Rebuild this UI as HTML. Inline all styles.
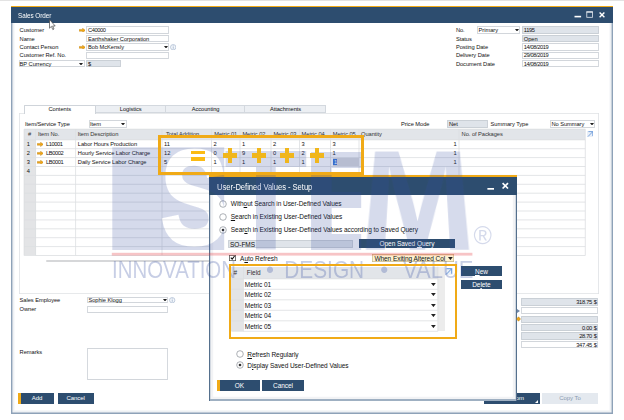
<!DOCTYPE html>
<html lang="en"><head><meta charset="utf-8"><title>Sales Order</title>
<style>
html,body{margin:0;padding:0;background:#fff;}
body{width:624px;height:420px;position:relative;overflow:hidden;font-family:"Liberation Sans",sans-serif;}
.b{position:absolute;display:block;}
.t{position:absolute;white-space:nowrap;letter-spacing:-0.05px;}
u{text-decoration-thickness:0.5px;text-underline-offset:0.6px;}
</style></head>
<body>
<div class="b" style="left:0.00px;top:0.00px;width:624.00px;height:1.40px;background:#e3e3e3;"></div>
<div class="b" style="left:10.60px;top:5.60px;width:602.00px;height:408.00px;background:#ffffff;box-shadow:inset 0 0 0 1.4px #8ea2b8, inset 0 0 0 3.4px #eef1f4;"></div>
<div class="b" style="left:10.60px;top:5.50px;width:602.00px;height:1.70px;background:#f0aa17;"></div>
<div class="b" style="left:10.60px;top:7.00px;width:602.00px;height:15.60px;background:#2d4d6f;"></div>
<div class="t" style="transform:scaleX(0.8325);transform-origin:0 50%;top:10.86px;font-size:7.6px;line-height:9.88px;color:#fff;left:17.70px;">Sales Order</div>
<svg class="b" style="left:570px;top:8px" width="40" height="14" viewBox="570 8 40 14"><rect x="574.5" y="15.8" width="6.6" height="1.6" fill="#fff"/><rect x="586.8" y="11.9" width="5.6" height="5.4" fill="none" stroke="#e4e9ef" stroke-width="0.8"/><rect x="586.4" y="11.4" width="6.4" height="1.2" fill="#e4e9ef"/><path d="M599.6 12.4L604.4 17.2M604.4 12.4L599.6 17.2" stroke="#fff" stroke-width="1.4"/></svg>
<svg class="b" style="left:46px;top:18px" width="12" height="14" viewBox="0 0 12 14"><path d="M3.5 1.5 L3.5 10.2 L5.4 8.4 L6.8 11.6 L8 11 L6.6 8 L9.2 8 Z" fill="#fff" stroke="#444" stroke-width="0.7"/></svg>
<div class="t" style="top:27.18px;font-size:5.72px;line-height:7.44px;color:#111;left:19.60px;">Customer</div>
<div class="t" style="top:35.68px;font-size:5.72px;line-height:7.44px;color:#111;left:19.60px;">Name</div>
<div class="t" style="top:44.18px;font-size:5.72px;line-height:7.44px;color:#111;left:19.60px;">Contact Person</div>
<div class="t" style="top:52.38px;font-size:5.72px;line-height:7.44px;color:#111;left:19.60px;">Customer Ref. No.</div>
<div class="b" style="left:86.40px;top:26.40px;width:82.20px;height:7.40px;background:#fff;box-shadow:inset 0 0 0 0.7px #c3c9d0;border-radius:1px;"></div>
<div class="t" style="top:27.18px;font-size:5.72px;line-height:7.44px;color:#111;left:88.00px;letter-spacing:-0.42px;">C40000</div>
<svg class="b" style="left:78.60px;top:27.70px" width="6.7" height="4.7" viewBox="0 0 64 52" preserveAspectRatio="none"><path d="M2 16H34V2L62 26L34 50V36H2Z" fill="#f0a818" stroke="#b87a10" stroke-width="4"/></svg>
<div class="b" style="left:86.40px;top:34.90px;width:82.20px;height:7.40px;background:#fff;box-shadow:inset 0 0 0 0.7px #c3c9d0;border-radius:1px;"></div>
<div class="t" style="top:35.68px;font-size:5.72px;line-height:7.44px;color:#111;left:88.00px;">Earthshaker Corporation</div>
<div class="b" style="left:86.40px;top:43.40px;width:82.20px;height:7.40px;background:#fff;box-shadow:inset 0 0 0 0.7px #c3c9d0;border-radius:1px;"></div>
<div class="t" style="top:44.18px;font-size:5.72px;line-height:7.44px;color:#111;left:88.00px;">Bob McKensly</div>
<svg class="b" style="left:78.60px;top:44.70px" width="6.7" height="4.7" viewBox="0 0 64 52" preserveAspectRatio="none"><path d="M2 16H34V2L62 26L34 50V36H2Z" fill="#f0a818" stroke="#b87a10" stroke-width="4"/></svg>
<svg class="b" style="left:163.70px;top:45.90px" width="4.00" height="2.60" viewBox="0 0 40 26"><path d="M0 0H40L20 26Z" fill="#222"/></svg>
<svg class="b" style="left:170.10px;top:43.90px" width="6.4" height="6.4" viewBox="0 0 64 64"><circle cx="32" cy="32" r="27" fill="#f4f7fb" stroke="#a9b9d0" stroke-width="7"/><rect x="28" y="26" width="8" height="22" fill="#9fb2cc"/><rect x="28" y="14" width="8" height="8" fill="#9fb2cc"/></svg>
<div class="b" style="left:86.40px;top:51.60px;width:82.20px;height:7.40px;background:#fff;box-shadow:inset 0 0 0 0.7px #c3c9d0;border-radius:1px;"></div>
<div class="b" style="left:18.60px;top:60.10px;width:66.00px;height:7.40px;background:#fff;box-shadow:inset 0 0 0 0.7px #c3c9d0;border-radius:1px;"></div>
<div class="t" style="top:60.88px;font-size:5.72px;line-height:7.44px;color:#111;left:19.60px;">BP Currency</div>
<svg class="b" style="left:79.20px;top:62.60px" width="4.00" height="2.60" viewBox="0 0 40 26"><path d="M0 0H40L20 26Z" fill="#222"/></svg>
<div class="b" style="left:86.40px;top:60.10px;width:34.20px;height:7.40px;background:#dfe4ea;box-shadow:inset 0 0 0 0.7px #c3c9d0;border-radius:1px;"></div>
<div class="t" style="top:60.88px;font-size:5.72px;line-height:7.44px;color:#111;left:88.00px;">$</div>
<div class="t" style="top:27.18px;font-size:5.72px;line-height:7.44px;color:#111;left:455.90px;">No.</div>
<div class="t" style="top:35.68px;font-size:5.72px;line-height:7.44px;color:#111;left:455.90px;">Status</div>
<div class="t" style="top:44.18px;font-size:5.72px;line-height:7.44px;color:#111;left:455.90px;">Posting Date</div>
<div class="t" style="top:52.38px;font-size:5.72px;line-height:7.44px;color:#111;left:455.90px;">Delivery Date</div>
<div class="t" style="top:60.88px;font-size:5.72px;line-height:7.44px;color:#111;left:455.90px;">Document Date</div>
<div class="b" style="left:477.00px;top:26.40px;width:43.20px;height:7.40px;background:#fff;box-shadow:inset 0 0 0 0.7px #c3c9d0;border-radius:1px;"></div>
<div class="t" style="top:27.18px;font-size:5.72px;line-height:7.44px;color:#111;left:478.60px;">Primary</div>
<svg class="b" style="left:514.80px;top:28.90px" width="4.00" height="2.60" viewBox="0 0 40 26"><path d="M0 0H40L20 26Z" fill="#222"/></svg>
<div class="b" style="left:522.20px;top:26.40px;width:76.40px;height:7.40px;background:#dfe4ea;box-shadow:inset 0 0 0 0.7px #c3c9d0;border-radius:1px;"></div>
<div class="t" style="top:27.18px;font-size:5.72px;line-height:7.44px;color:#111;left:523.80px;letter-spacing:-0.42px;">1195</div>
<div class="b" style="left:522.20px;top:34.90px;width:76.40px;height:7.40px;background:#dfe4ea;box-shadow:inset 0 0 0 0.7px #c3c9d0;border-radius:1px;"></div>
<div class="t" style="top:35.68px;font-size:5.72px;line-height:7.44px;color:#111;left:523.80px;">Open</div>
<div class="b" style="left:522.20px;top:43.40px;width:76.40px;height:7.40px;background:#fff;box-shadow:inset 0 0 0 0.7px #c3c9d0;border-radius:1px;"></div>
<div class="t" style="top:44.18px;font-size:5.72px;line-height:7.44px;color:#111;left:523.80px;letter-spacing:-0.42px;">14/08/2019</div>
<div class="b" style="left:522.20px;top:51.60px;width:76.40px;height:7.40px;background:#fff;box-shadow:inset 0 0 0 0.7px #c3c9d0;border-radius:1px;"></div>
<div class="t" style="top:52.38px;font-size:5.72px;line-height:7.44px;color:#111;left:523.80px;letter-spacing:-0.42px;">29/08/2019</div>
<div class="b" style="left:522.20px;top:60.10px;width:76.40px;height:7.40px;background:#fff;box-shadow:inset 0 0 0 0.7px #c3c9d0;border-radius:1px;"></div>
<div class="t" style="top:60.88px;font-size:5.72px;line-height:7.44px;color:#111;left:523.80px;letter-spacing:-0.42px;">14/08/2019</div>
<div class="b" style="left:19.00px;top:113.00px;width:580.00px;height:181.40px;background:#fff;box-shadow:inset 0 0 0 0.8px #dfe2e5;"></div>
<div class="b" style="left:23.80px;top:104.60px;width:71.90px;height:9.30px;background:#fff;border:0.8px solid #cfd4da;border-bottom:none;box-sizing:border-box;border-radius:1px 1px 0 0;"></div>
<div class="t" style="top:106.08px;font-size:5.72px;line-height:7.44px;color:#111;left:-40.25px;width:200px;text-align:center;">Contents</div>
<div class="b" style="left:95.70px;top:104.60px;width:70.10px;height:8.80px;background:#eceff3;border:0.8px solid #d3d8de;box-sizing:border-box;border-left:none;"></div>
<div class="t" style="top:106.08px;font-size:5.72px;line-height:7.44px;color:#111;left:30.75px;width:200px;text-align:center;">Logistics</div>
<div class="b" style="left:165.80px;top:104.60px;width:79.50px;height:8.80px;background:#eceff3;border:0.8px solid #d3d8de;box-sizing:border-box;border-left:none;"></div>
<div class="t" style="top:106.08px;font-size:5.72px;line-height:7.44px;color:#111;left:105.55px;width:200px;text-align:center;">Accounting</div>
<div class="b" style="left:245.30px;top:104.60px;width:80.40px;height:8.80px;background:#eceff3;border:0.8px solid #d3d8de;box-sizing:border-box;border-left:none;"></div>
<div class="t" style="top:106.08px;font-size:5.72px;line-height:7.44px;color:#111;left:185.50px;width:200px;text-align:center;">Attachments</div>
<div class="t" style="top:121.18px;font-size:5.72px;line-height:7.44px;color:#111;left:25.00px;">Item/Service Type</div>
<div class="b" style="left:88.50px;top:120.40px;width:38.30px;height:7.40px;background:#fff;box-shadow:inset 0 0 0 0.7px #c3c9d0;border-radius:1px;"></div>
<div class="t" style="top:121.18px;font-size:5.72px;line-height:7.44px;color:#111;left:90.00px;">Item</div>
<svg class="b" style="left:121.40px;top:122.90px" width="4.00" height="2.60" viewBox="0 0 40 26"><path d="M0 0H40L20 26Z" fill="#222"/></svg>
<div class="t" style="top:120.98px;font-size:5.72px;line-height:7.44px;color:#111;left:401.00px;">Price Mode</div>
<div class="b" style="left:447.40px;top:120.20px;width:40.20px;height:7.40px;background:#dfe4ea;box-shadow:inset 0 0 0 0.7px #c3c9d0;border-radius:1px;"></div>
<div class="t" style="top:120.98px;font-size:5.72px;line-height:7.44px;color:#111;left:449.00px;">Net</div>
<div class="t" style="top:120.98px;font-size:5.72px;line-height:7.44px;color:#111;left:490.60px;">Summary Type</div>
<div class="b" style="left:550.00px;top:120.40px;width:44.70px;height:7.40px;background:#fff;box-shadow:inset 0 0 0 0.7px #c3c9d0;border-radius:1px;"></div>
<div class="t" style="top:121.18px;font-size:5.72px;line-height:7.44px;color:#111;left:551.40px;">No Summary</div>
<svg class="b" style="left:590.00px;top:122.90px" width="4.00" height="2.60" viewBox="0 0 40 26"><path d="M0 0H40L20 26Z" fill="#222"/></svg>
<div class="b" style="left:24.10px;top:129.20px;width:561.20px;height:10.60px;background:#e2e5e9;"></div>
<div class="b" style="left:24.10px;top:139.80px;width:11.50px;height:115.70px;background:#e3e4e6;"></div>
<svg class="b" style="left:0;top:0" width="624" height="420" viewBox="0 0 624 420" fill="none" stroke="#dcdee1" stroke-width="0.8"><path d="M24.1 129.20H585.3"/><path d="M24.1 139.80H585.3"/><path d="M24.1 148.70H585.3"/><path d="M24.1 157.60H585.3"/><path d="M24.1 166.50H585.3"/><path d="M24.1 175.40H585.3"/><path d="M24.1 184.30H585.3"/><path d="M24.1 193.20H585.3"/><path d="M24.1 202.10H585.3"/><path d="M24.1 211.00H585.3"/><path d="M24.1 219.90H585.3"/><path d="M24.1 228.80H585.3"/><path d="M24.1 237.70H585.3"/><path d="M24.1 246.60H585.3"/><path d="M24.1 255.50H585.3"/><path d="M24.1 129.2V255.5"/><path d="M35.6 129.2V255.5"/><path d="M75.6 129.2V255.5"/><path d="M162 129.2V255.5"/><path d="M211.5 129.2V255.5"/><path d="M240 129.2V255.5"/><path d="M271 129.2V255.5"/><path d="M299.5 129.2V255.5"/><path d="M330.5 129.2V255.5"/><path d="M359 129.2V255.5"/><path d="M459 129.2V255.5"/><path d="M585.3 129.2V255.5"/></svg>
<div class="t" style="top:131.08px;font-size:5.72px;line-height:7.44px;color:#333;left:27.90px;">#</div>
<div class="t" style="top:131.08px;font-size:5.72px;line-height:7.44px;color:#333;left:38.00px;">Item No.</div>
<div class="t" style="top:131.08px;font-size:5.72px;line-height:7.44px;color:#333;left:77.80px;">Item Description</div>
<div class="t" style="top:131.08px;font-size:5.72px;line-height:7.44px;color:#333;left:165.90px;">Total Addition</div>
<div class="t" style="top:131.08px;font-size:5.72px;line-height:7.44px;color:#333;left:214.20px;">Metric 01</div>
<div class="t" style="top:131.08px;font-size:5.72px;line-height:7.44px;color:#333;left:242.40px;">Metric 02</div>
<div class="t" style="top:131.08px;font-size:5.72px;line-height:7.44px;color:#333;left:273.40px;">Metric 03</div>
<div class="t" style="top:131.08px;font-size:5.72px;line-height:7.44px;color:#333;left:301.60px;">Metric 04</div>
<div class="t" style="top:131.08px;font-size:5.72px;line-height:7.44px;color:#333;left:332.70px;">Metric 05</div>
<div class="t" style="top:131.08px;font-size:5.72px;line-height:7.44px;color:#333;left:361.00px;">Quantity</div>
<div class="t" style="top:131.08px;font-size:5.72px;line-height:7.44px;color:#333;left:461.60px;">No. of Packages</div>
<div class="t" style="top:141.43px;font-size:5.72px;line-height:7.44px;color:#111;left:26.80px;">1</div>
<svg class="b" style="left:36.50px;top:141.95px" width="6.7" height="4.7" viewBox="0 0 64 52" preserveAspectRatio="none"><path d="M2 16H34V2L62 26L34 50V36H2Z" fill="#f0a818" stroke="#b87a10" stroke-width="4"/></svg>
<div class="t" style="top:141.43px;font-size:5.72px;line-height:7.44px;color:#111;left:46.00px;letter-spacing:-0.42px;">L10001</div>
<div class="t" style="top:141.43px;font-size:5.72px;line-height:7.44px;color:#111;left:77.80px;">Labor Hours Production</div>
<div class="t" style="top:141.43px;font-size:5.72px;line-height:7.44px;color:#111;left:164.10px;">11</div>
<div class="t" style="top:141.43px;font-size:5.72px;line-height:7.44px;color:#111;left:213.50px;">2</div>
<div class="t" style="top:141.43px;font-size:5.72px;line-height:7.44px;color:#111;left:242.00px;">1</div>
<div class="t" style="top:141.43px;font-size:5.72px;line-height:7.44px;color:#111;left:273.00px;">2</div>
<div class="t" style="top:141.43px;font-size:5.72px;line-height:7.44px;color:#111;left:301.50px;">3</div>
<div class="t" style="top:141.43px;font-size:5.72px;line-height:7.44px;color:#111;left:332.50px;">3</div>
<div class="t" style="top:141.43px;font-size:5.72px;line-height:7.44px;color:#111;right:167.40px;">1</div>
<div class="t" style="top:150.33px;font-size:5.72px;line-height:7.44px;color:#111;left:26.80px;">2</div>
<svg class="b" style="left:36.50px;top:150.85px" width="6.7" height="4.7" viewBox="0 0 64 52" preserveAspectRatio="none"><path d="M2 16H34V2L62 26L34 50V36H2Z" fill="#f0a818" stroke="#b87a10" stroke-width="4"/></svg>
<div class="t" style="top:150.33px;font-size:5.72px;line-height:7.44px;color:#111;left:46.00px;letter-spacing:-0.42px;">LB0002</div>
<div class="t" style="top:150.33px;font-size:5.72px;line-height:7.44px;color:#111;left:77.80px;">Hourly Service Labor Charge</div>
<div class="t" style="top:150.33px;font-size:5.72px;line-height:7.44px;color:#111;left:164.10px;">12</div>
<div class="t" style="top:150.33px;font-size:5.72px;line-height:7.44px;color:#111;left:213.50px;">0</div>
<div class="t" style="top:150.33px;font-size:5.72px;line-height:7.44px;color:#111;left:242.00px;">9</div>
<div class="t" style="top:150.33px;font-size:5.72px;line-height:7.44px;color:#111;left:273.00px;">0</div>
<div class="t" style="top:150.33px;font-size:5.72px;line-height:7.44px;color:#111;left:301.50px;">2</div>
<div class="t" style="top:150.33px;font-size:5.72px;line-height:7.44px;color:#111;left:332.50px;">1</div>
<div class="t" style="top:150.33px;font-size:5.72px;line-height:7.44px;color:#111;right:167.40px;">1</div>
<div class="t" style="top:159.23px;font-size:5.72px;line-height:7.44px;color:#111;left:26.80px;">3</div>
<svg class="b" style="left:36.50px;top:159.75px" width="6.7" height="4.7" viewBox="0 0 64 52" preserveAspectRatio="none"><path d="M2 16H34V2L62 26L34 50V36H2Z" fill="#f0a818" stroke="#b87a10" stroke-width="4"/></svg>
<div class="t" style="top:159.23px;font-size:5.72px;line-height:7.44px;color:#111;left:46.00px;letter-spacing:-0.42px;">LB0001</div>
<div class="t" style="top:159.23px;font-size:5.72px;line-height:7.44px;color:#111;left:77.80px;">Daily Service Labor Charge</div>
<div class="t" style="top:159.23px;font-size:5.72px;line-height:7.44px;color:#111;left:164.10px;">5</div>
<div class="t" style="top:159.23px;font-size:5.72px;line-height:7.44px;color:#111;left:213.50px;">1</div>
<div class="t" style="top:159.23px;font-size:5.72px;line-height:7.44px;color:#111;left:242.00px;">1</div>
<div class="t" style="top:159.23px;font-size:5.72px;line-height:7.44px;color:#111;left:273.00px;">1</div>
<div class="t" style="top:159.23px;font-size:5.72px;line-height:7.44px;color:#111;left:301.50px;">1</div>
<div class="t" style="top:159.23px;font-size:5.72px;line-height:7.44px;color:#111;right:167.40px;">1</div>
<div class="t" style="top:168.03px;font-size:5.72px;line-height:7.44px;color:#111;left:26.80px;">4</div>
<div class="b" style="left:333.20px;top:158.45px;width:25.60px;height:7.20px;background:#d9dbde;"></div>
<div class="b" style="left:333.40px;top:159.05px;width:3.40px;height:6.00px;background:#3c78d8;"></div>
<div class="t" style="top:159.13px;font-size:5.72px;line-height:7.44px;color:#fff;left:333.90px;">1</div>
<svg class="b" style="left:586.60px;top:130.60px" width="6.4" height="6.4" viewBox="0 0 64 64"><rect x="0" y="0" width="64" height="64" fill="#e9eff8"/><path d="M14 6H58V50M58 6L10 56" fill="none" stroke="#5b8fd6" stroke-width="8"/></svg>
<div class="b" style="left:45.50px;top:259.60px;width:214.50px;height:2.60px;background:#d6d7d9;border-radius:1.3px;"></div>
<div class="t" style="top:296.68px;font-size:5.72px;line-height:7.44px;color:#111;left:19.60px;">Sales Employee</div>
<div class="b" style="left:86.90px;top:296.60px;width:80.90px;height:6.80px;background:#fff;box-shadow:inset 0 0 0 0.7px #c3c9d0;border-radius:1px;"></div>
<div class="t" style="top:297.08px;font-size:5.72px;line-height:7.44px;color:#111;left:88.40px;">Sophie Klogg</div>
<svg class="b" style="left:162.80px;top:298.60px" width="4.00" height="2.60" viewBox="0 0 40 26"><path d="M0 0H40L20 26Z" fill="#222"/></svg>
<svg class="b" style="left:169.30px;top:296.60px" width="6.4" height="6.4" viewBox="0 0 64 64"><circle cx="32" cy="32" r="27" fill="#f4f7fb" stroke="#a9b9d0" stroke-width="7"/><rect x="28" y="26" width="8" height="22" fill="#9fb2cc"/><rect x="28" y="14" width="8" height="8" fill="#9fb2cc"/></svg>
<div class="t" style="top:306.08px;font-size:5.72px;line-height:7.44px;color:#111;left:19.60px;">Owner</div>
<div class="b" style="left:86.90px;top:305.80px;width:80.90px;height:6.80px;background:#fff;box-shadow:inset 0 0 0 0.7px #c3c9d0;border-radius:1px;"></div>
<div class="t" style="top:349.38px;font-size:5.72px;line-height:7.44px;color:#111;left:19.60px;">Remarks</div>
<div class="b" style="left:86.90px;top:348.10px;width:80.90px;height:32.10px;background:#fff;box-shadow:inset 0 0 0 0.7px #c3c9d0;border-radius:1px;"></div>
<div class="b" style="left:18.00px;top:393.20px;width:36.00px;height:10.60px;background:#2d4d6f;"></div>
<div class="b" style="left:18.00px;top:393.20px;width:3.00px;height:10.60px;background:#f0aa17;"></div>
<div class="t" style="top:395.40px;font-size:6px;line-height:7.80px;color:#fff;left:-63.00px;width:200px;text-align:center;">Add</div>
<div class="b" style="left:57.60px;top:393.20px;width:36.00px;height:10.60px;background:#2d4d6f;"></div>
<div class="t" style="top:395.40px;font-size:6px;line-height:7.80px;color:#fff;left:-24.40px;width:200px;text-align:center;">Cancel</div>
<div class="b" style="left:484.00px;top:393.30px;width:55.60px;height:10.40px;background:#2d4d6f;"></div>
<div class="t" style="top:395.40px;font-size:6px;line-height:7.80px;color:#fff;left:409.30px;width:200px;text-align:center;">Copy From</div>
<svg class="b" style="left:535px;top:399.6px" width="3" height="3" viewBox="0 0 3 3"><path d="M3 0V3H0Z" fill="#fff"/></svg>
<div class="b" style="left:542.20px;top:393.30px;width:55.60px;height:10.40px;background:#e4e9ef;"></div>
<div class="t" style="top:395.40px;font-size:6px;line-height:7.80px;color:#8a9bb0;left:470.00px;width:200px;text-align:center;">Copy To</div>
<div class="b" style="left:521.20px;top:298.45px;width:76.80px;height:7.30px;background:#dfe4ea;box-shadow:inset 0 0 0 0.7px #c3c9d0;border-radius:1px;"></div>
<div class="t" style="top:299.48px;font-size:5.72px;line-height:7.44px;color:#111;right:27.40px;letter-spacing:-0.3px;word-spacing:0.5px;">318.75 $</div>
<div class="b" style="left:521.20px;top:307.05px;width:76.80px;height:7.30px;background:#fff;box-shadow:inset 0 0 0 0.7px #c3c9d0;border-radius:1px;"></div>
<div class="b" style="left:521.20px;top:315.55px;width:76.80px;height:7.30px;background:#dfe4ea;box-shadow:inset 0 0 0 0.7px #c3c9d0;border-radius:1px;"></div>
<div class="b" style="left:521.20px;top:324.15px;width:76.80px;height:7.30px;background:#dfe4ea;box-shadow:inset 0 0 0 0.7px #c3c9d0;border-radius:1px;"></div>
<div class="t" style="top:325.18px;font-size:5.72px;line-height:7.44px;color:#111;right:27.40px;letter-spacing:-0.3px;word-spacing:0.5px;">0.00 $</div>
<div class="b" style="left:521.20px;top:332.35px;width:76.80px;height:7.30px;background:#dfe4ea;box-shadow:inset 0 0 0 0.7px #c3c9d0;border-radius:1px;"></div>
<div class="t" style="top:333.38px;font-size:5.72px;line-height:7.44px;color:#111;right:27.40px;letter-spacing:-0.3px;word-spacing:0.5px;">28.70 $</div>
<div class="b" style="left:521.20px;top:340.95px;width:76.80px;height:7.30px;background:#fff;box-shadow:inset 0 0 0 0.7px #c3c9d0;border-radius:1px;"></div>
<div class="t" style="top:341.98px;font-size:5.72px;line-height:7.44px;color:#111;right:27.40px;letter-spacing:-0.3px;word-spacing:0.5px;">347.45 $</div>
<div class="b" style="left:208.60px;top:175.40px;width:308.60px;height:225.20px;background:#fff;box-shadow:inset 0 0 0 1.2px #55708d, inset 0 0 0 4.2px #f2f3f5;"></div>
<div class="b" style="left:209.80px;top:399.20px;width:306.20px;height:1.40px;background:#9fb0c2;"></div>
<div class="b" style="left:208.60px;top:175.40px;width:308.60px;height:1.60px;background:#f0aa17;"></div>
<div class="b" style="left:208.60px;top:176.80px;width:308.60px;height:18.30px;background:#2d4d6f;"></div>
<div class="t" style="transform:scaleX(0.8291);transform-origin:0 50%;top:182.02px;font-size:9.2px;line-height:11.96px;color:#fff;left:217.40px;">User-Defined Values - Setup</div>
<svg class="b" style="left:484px;top:180px" width="28" height="12" viewBox="484 180 28 12"><rect x="487.4" y="188" width="6.6" height="1.7" fill="#fff"/><path d="M502.6 183.1L508 188.5M508 183.1L502.6 188.5" stroke="#fff" stroke-width="1.7"/></svg>
<svg class="b" style="left:219.30px;top:199.60px" width="8" height="8" viewBox="0 0 80 80"><circle cx="40" cy="40" r="33" fill="#fff" stroke="#8a8f96" stroke-width="7"/></svg>
<div class="t" style="top:200.18px;font-size:6.5px;line-height:8.45px;color:#111;left:230.80px;">With<u>o</u>ut Search in User-Defined Values</div>
<svg class="b" style="left:219.30px;top:213.00px" width="8" height="8" viewBox="0 0 80 80"><circle cx="40" cy="40" r="33" fill="#fff" stroke="#8a8f96" stroke-width="7"/></svg>
<div class="t" style="top:213.18px;font-size:6.5px;line-height:8.45px;color:#111;left:230.80px;"><u>S</u>earch in Existing User-Defined Values</div>
<svg class="b" style="left:219.30px;top:225.70px" width="8" height="8" viewBox="0 0 80 80"><circle cx="40" cy="40" r="33" fill="#fff" stroke="#8a8f96" stroke-width="7"/><circle cx="40" cy="40" r="13" fill="#333"/></svg>
<div class="t" style="top:226.28px;font-size:6.5px;line-height:8.45px;color:#111;left:230.80px;">Sear<u>c</u>h in Existing User-Defined Values according to Saved Query</div>
<div class="b" style="left:228.20px;top:239.60px;width:125.20px;height:8.60px;background:#dfe4ea;box-shadow:inset 0 0 0 0.7px #c3c9d0;border-radius:1px;"></div>
<div class="t" style="top:240.58px;font-size:6.5px;line-height:8.45px;color:#111;left:230.00px;">SO-FMS</div>
<div class="b" style="left:358.50px;top:239.20px;width:96.90px;height:9.00px;background:#2d4d6f;"></div>
<div class="t" style="top:240.38px;font-size:6.5px;line-height:8.45px;color:#fff;left:306.95px;width:200px;text-align:center;">Open Saved <u>Q</u>uery</div>
<div class="b" style="left:228.80px;top:254.80px;width:6.80px;height:6.60px;background:#fff;box-shadow:inset 0 0 0 0.8px #555;"></div>
<svg class="b" style="left:229.6px;top:255.4px" width="5.4" height="5.4" viewBox="0 0 54 54"><path d="M8 26L22 42L46 10" fill="none" stroke="#111" stroke-width="11"/></svg>
<div class="t" style="top:254.78px;font-size:6.5px;line-height:8.45px;color:#111;left:240.10px;">A<u>u</u>to Refresh</div>
<div class="b" style="left:372.30px;top:253.80px;width:81.70px;height:8.40px;background:#fdf1cf;box-shadow:inset 0 0 0 0.7px #c9b98a;"></div>
<div class="t" style="top:254.58px;font-size:6.5px;line-height:8.45px;color:#111;left:374.40px;">When Exiting Altered Col</div>
<svg class="b" style="left:448.00px;top:256.56px" width="4.80" height="3.12" viewBox="0 0 40 26"><path d="M0 0H40L20 26Z" fill="#222"/></svg>
<div class="b" style="left:231.40px;top:266.60px;width:206.40px;height:12.20px;background:#e2e5e9;"></div>
<div class="b" style="left:231.40px;top:278.80px;width:12.10px;height:52.50px;background:#e3e4e6;"></div>
<div class="b" style="left:437.80px;top:266.60px;width:7.20px;height:64.70px;background:#ececec;"></div>
<svg class="b" style="left:0;top:0" width="624" height="420" viewBox="0 0 624 420" fill="none" stroke="#dcdee1" stroke-width="0.8"><path d="M231.4 278.80H437.8"/><path d="M231.4 289.30H437.8"/><path d="M231.4 299.80H437.8"/><path d="M231.4 310.30H437.8"/><path d="M231.4 320.80H437.8"/><path d="M231.4 331.30H437.8"/><path d="M243.5 266.6V331.3M437.8 266.6V331.3"/></svg>
<div class="t" style="top:269.38px;font-size:6.5px;line-height:8.45px;color:#333;left:233.60px;">#</div>
<div class="t" style="top:269.38px;font-size:6.5px;line-height:8.45px;color:#333;left:246.80px;">Field</div>
<div class="t" style="top:280.62px;font-size:6.5px;line-height:8.45px;color:#111;left:244.80px;">Metric 01</div>
<svg class="b" style="left:430.90px;top:282.61px" width="4.80" height="3.12" viewBox="0 0 40 26"><path d="M0 0H40L20 26Z" fill="#222"/></svg>
<div class="t" style="top:291.12px;font-size:6.5px;line-height:8.45px;color:#111;left:244.80px;">Metric 02</div>
<svg class="b" style="left:430.90px;top:293.11px" width="4.80" height="3.12" viewBox="0 0 40 26"><path d="M0 0H40L20 26Z" fill="#222"/></svg>
<div class="t" style="top:301.62px;font-size:6.5px;line-height:8.45px;color:#111;left:244.80px;">Metric 03</div>
<svg class="b" style="left:430.90px;top:303.61px" width="4.80" height="3.12" viewBox="0 0 40 26"><path d="M0 0H40L20 26Z" fill="#222"/></svg>
<div class="t" style="top:312.12px;font-size:6.5px;line-height:8.45px;color:#111;left:244.80px;">Metric 04</div>
<svg class="b" style="left:430.90px;top:314.11px" width="4.80" height="3.12" viewBox="0 0 40 26"><path d="M0 0H40L20 26Z" fill="#222"/></svg>
<div class="t" style="top:322.62px;font-size:6.5px;line-height:8.45px;color:#111;left:244.80px;">Metric 05</div>
<svg class="b" style="left:430.90px;top:324.61px" width="4.80" height="3.12" viewBox="0 0 40 26"><path d="M0 0H40L20 26Z" fill="#222"/></svg>
<svg class="b" style="left:445.40px;top:267.80px" width="7.4" height="7.4" viewBox="0 0 64 64"><rect x="0" y="0" width="64" height="64" fill="#e9eff8"/><path d="M14 6H58V50M58 6L10 56" fill="none" stroke="#5b8fd6" stroke-width="8"/></svg>
<div class="b" style="left:460.50px;top:266.40px;width:41.90px;height:9.20px;background:#2d4d6f;"></div>
<div class="t" style="top:267.57px;font-size:6.5px;line-height:8.45px;color:#fff;left:381.45px;width:200px;text-align:center;"><u>N</u>ew</div>
<div class="b" style="left:460.50px;top:279.50px;width:41.90px;height:9.20px;background:#2d4d6f;"></div>
<div class="t" style="top:280.68px;font-size:6.5px;line-height:8.45px;color:#fff;left:381.45px;width:200px;text-align:center;">De<u>l</u>ete</div>
<svg class="b" style="left:235.90px;top:350.20px" width="8" height="8" viewBox="0 0 80 80"><circle cx="40" cy="40" r="33" fill="#fff" stroke="#8a8f96" stroke-width="7"/></svg>
<div class="t" style="top:350.77px;font-size:6.5px;line-height:8.45px;color:#111;left:247.30px;"><u>R</u>efresh Regularly</div>
<svg class="b" style="left:235.90px;top:361.00px" width="8" height="8" viewBox="0 0 80 80"><circle cx="40" cy="40" r="33" fill="#fff" stroke="#8a8f96" stroke-width="7"/><circle cx="40" cy="40" r="13" fill="#333"/></svg>
<div class="t" style="top:361.57px;font-size:6.5px;line-height:8.45px;color:#111;left:247.30px;">D<u>i</u>splay Saved User-Defined Values</div>
<div class="b" style="left:217.30px;top:380.00px;width:42.30px;height:11.40px;background:#2d4d6f;"></div>
<div class="b" style="left:217.30px;top:380.00px;width:3.20px;height:11.40px;background:#f0aa17;"></div>
<div class="t" style="top:382.27px;font-size:6.5px;line-height:8.45px;color:#fff;left:139.45px;width:200px;text-align:center;">OK</div>
<div class="b" style="left:261.90px;top:380.00px;width:42.30px;height:11.40px;background:#2d4d6f;"></div>
<div class="t" style="top:382.27px;font-size:6.5px;line-height:8.45px;color:#fff;left:183.05px;width:200px;text-align:center;">Cancel</div>
<svg class="b" style="left:516px;top:316px" width="5" height="6" viewBox="0 0 50 60"><path d="M5 30L25 8L45 30L25 52Z" fill="#f0a818" stroke="#b87a10" stroke-width="5"/></svg>
<svg class="b" style="left:517.4px;top:309.4px" width="3" height="4" viewBox="0 0 30 40"><path d="M0 0L30 20L0 40Z" fill="#6f87a8"/></svg>
<svg class="b" style="left:0;top:0;opacity:0.2" width="624" height="420" viewBox="0 0 624 420">
<defs><mask id="sm" maskUnits="userSpaceOnUse" x="100" y="130" width="200" height="140"><rect x="100" y="130" width="200" height="140" fill="#fff"/><text x="160.4" y="244.4" font-family="Liberation Sans, sans-serif" font-weight="bold" font-size="133.7" textLength="67.5" lengthAdjust="spacingAndGlyphs" fill="#000" stroke="#000" stroke-width="3.5">S</text></mask><clipPath id="ec"><rect x="300" y="140" width="61.2" height="120"/></clipPath></defs>
<rect x="112.3" y="147.3" width="111.9" height="102.7" fill="#324ba0" mask="url(#sm)"/>
<g font-family="Liberation Sans, sans-serif" font-weight="bold" font-size="142.8" fill="#324ba0">
<text x="224" y="250.4" textLength="83.7" lengthAdjust="spacingAndGlyphs">T</text>
<text x="301.6" y="250.4" clip-path="url(#ec)">E</text>
</g>
<text x="482.8" y="244.4" font-family="Liberation Sans, sans-serif" font-size="25" fill="#324ba0" text-anchor="middle">®</text>
</svg>
<div class="b" style="left:358.10px;top:129.50px;width:119.00px;height:142.8px;font-size:142.8px;line-height:1;font-weight:bold;color:#324ba0;opacity:0.2;text-align:center;transform-origin:50% 120.90px;transform:matrix3d(1.035,0,0,0, 0,1.218,0,-0.002205, 0,0,1,0, 0,0,0,1);">M</div>
<svg class="b" style="left:0;top:0" width="624" height="420" viewBox="0 0 624 420">
<rect x="111.8" y="252.8" width="360.6" height="2.8" fill="#e0262d" opacity="0.27"/>
<text y="278" font-family="Liberation Sans, sans-serif" font-size="23.4" fill="#324ba0" opacity="0.27"><tspan x="112" textLength="124" lengthAdjust="spacingAndGlyphs">INNOVATION</tspan> <tspan x="266" textLength="8" lengthAdjust="spacingAndGlyphs">•</tspan> <tspan x="284.2" textLength="80" lengthAdjust="spacingAndGlyphs">DESIGN</tspan> <tspan x="380.2" textLength="8" lengthAdjust="spacingAndGlyphs">•</tspan> <tspan x="403" textLength="70.5" lengthAdjust="spacingAndGlyphs">VALUE</tspan></text>
</svg>
<div class="b" style="left:158.00px;top:135.00px;width:206.40px;height:39.50px;border:3px solid #f0aa17;box-sizing:border-box;"></div>
<div class="b" style="left:190.80px;top:150.70px;width:14.40px;height:3.40px;background:#fbbb14;"></div>
<div class="b" style="left:190.80px;top:157.00px;width:14.40px;height:3.50px;background:#fbbb14;"></div>
<div class="b" style="left:222.80px;top:153.20px;width:14.40px;height:4.40px;background:#f0b61c;"></div>
<div class="b" style="left:227.80px;top:148.10px;width:4.40px;height:14.60px;background:#f0b61c;"></div>
<div class="b" style="left:251.70px;top:153.20px;width:14.40px;height:4.40px;background:#f0b61c;"></div>
<div class="b" style="left:256.70px;top:148.10px;width:4.40px;height:14.60px;background:#f0b61c;"></div>
<div class="b" style="left:279.60px;top:153.20px;width:14.40px;height:4.40px;background:#f0b61c;"></div>
<div class="b" style="left:284.60px;top:148.10px;width:4.40px;height:14.60px;background:#f0b61c;"></div>
<div class="b" style="left:309.70px;top:153.20px;width:14.40px;height:4.40px;background:#f0b61c;"></div>
<div class="b" style="left:314.70px;top:148.10px;width:4.40px;height:14.60px;background:#f0b61c;"></div>
<div class="b" style="left:228.80px;top:264.00px;width:228.40px;height:74.60px;border:2.6px solid #f0aa17;box-sizing:border-box;"></div>
</body></html>
